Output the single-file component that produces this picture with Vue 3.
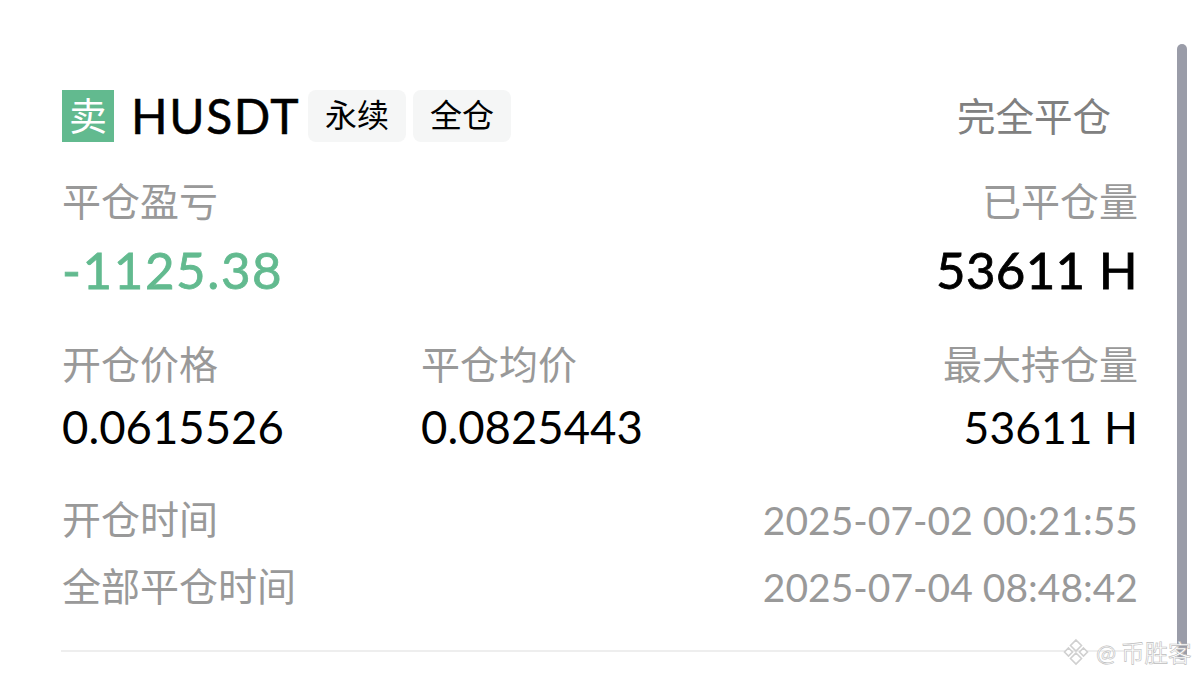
<script setup>
const stats = [
  { label: '开仓价格', value: '0.0615526' },
  { label: '平仓均价', value: '0.0825443' },
  { label: '最大持仓量', value: '53611 H' },
]
const times = [
  { label: '开仓时间', value: '2025-07-02 00:21:55' },
  { label: '全部平仓时间', value: '2025-07-04 08:48:42' },
]
</script>

<template>
  <main class="page">
    <section class="card">
      <header class="head">
        <span class="side">卖</span>
        <span class="symbol">HUSDT</span>
        <span class="tag">永续</span>
        <span class="tag">全仓</span>
        <span class="state">完全平仓</span>
      </header>
      <div class="pnl">
        <div>
          <div class="label">平仓盈亏</div>
          <div class="big green">-1125.38</div>
        </div>
        <div class="right">
          <div class="label">已平仓量</div>
          <div class="big">53611 H</div>
        </div>
      </div>
      <div class="stats">
        <div v-for="s in stats" :key="s.label" class="stat">
          <div class="label">{{ s.label }}</div>
          <div class="num">{{ s.value }}</div>
        </div>
      </div>
      <div class="times">
        <div v-for="t in times" :key="t.label" class="time">
          <span class="label">{{ t.label }}</span>
          <span class="when">{{ t.value }}</span>
        </div>
      </div>
      <div class="rule"></div>
    </section>
    <div class="scrollbar"></div>
    <div class="mark">
      <svg width="28" height="28" viewBox="0 0 28 28" fill="#fff" stroke="#d0d0d0" stroke-width="1.6">
        <path d="M14 2l5.5 5.5-5.5 5.5-5.5-5.5zM6.5 10l4 4-4 4-4-4zM21.500 10l4 4-4 4-4-4zM14 15l5.500 5.500-5.500 5.500-5.500-5.500z" />
      </svg>
      <span class="at">@</span>
      <span class="brand">币胜客</span>
    </div>
  </main>
</template>

<style>
html, body { margin: 0; background: #fff; overflow: hidden; }
</style>

<style scoped>
.page {
  position: relative;
  width: 1200px;
  height: 674px;
  overflow: hidden;
  background: #fff;
  font-family: Lato, "Noto Sans CJK SC", sans-serif;
  color: #000;
}
.card {
  box-sizing: border-box;
  width: 1138px;
  padding: 90px 0 0 62px;
}
.head {
  display: flex;
  align-items: center;
  height: 52px;
}
.side {
  width: 52px;
  height: 52px;
  background: #62ba8f;
  color: #fff;
  font-size: 38px;
  line-height: 50px;
  text-align: center;
}
.symbol {
  width: 177px;
  margin-left: 17px;
  font-size: 48px;
  line-height: 48px;
  letter-spacing: 1.6px;
  -webkit-text-stroke: 0.5px #000;
}
.tag {
  width: 98px;
  height: 52px;
  margin-right: 7px;
  border-radius: 8px;
  background: #f5f6f6;
  font-size: 32px;
  line-height: 50px;
  text-align: center;
}
.state {
  margin-left: auto;
  margin-right: 27px;
  font-size: 38.500px;
  line-height: 46px;
  color: #808080;
}
.label {
  font-size: 39px;
  line-height: 46px;
  color: #999;
}
.pnl {
  display: flex;
  justify-content: space-between;
  margin-top: 36px;
}
.right { text-align: right; }
.big {
  margin-top: 21px;
  font-size: 51px;
  line-height: 50px;
  letter-spacing: 0.3px;
  -webkit-text-stroke: 0.8px currentColor;
}
.green {
  color: #62ba8f;
  letter-spacing: 1.6px;
}
.stats {
  display: grid;
  grid-template-columns: 359px 1fr auto;
  margin-top: 46px;
}
.stat:last-child { text-align: right; }
.num {
  margin-top: 17px;
  font-size: 45.500px;
  line-height: 46px;
}
.stat:last-child .num { font-size: 44.500px; }
.times {
  margin-top: 44px;
  display: flex;
  flex-direction: column;
  gap: 18px;
}
.time {
  display: flex;
  justify-content: space-between;
  align-items: center;
}
.when {
  font-size: 39px;
  line-height: 46px;
  color: #999;
  padding-top: 3px;
}
.rule {
  height: 2px;
  margin-top: 40px;
  margin-left: -1px;
  background: #eeeeee;
}
.scrollbar {
  position: absolute;
  left: 1177px;
  top: 44px;
  width: 10px;
  height: 616px;
  border-radius: 5px;
  background: #9a9ca8;
}
.mark {
  position: absolute;
  left: 1062px;
  top: 635px;
  display: flex;
  align-items: center;
  gap: 6px;
  color: #fff;
  -webkit-text-stroke: 0.6px #bdbdbd;
}
.at { font-size: 24px; }
.brand { font-size: 23.500px; margin-left: -1px; }
</style>
